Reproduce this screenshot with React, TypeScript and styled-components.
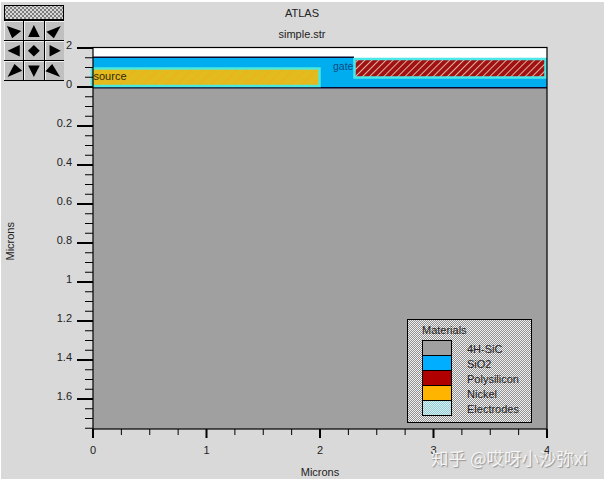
import React from "react";
import styled, { createGlobalStyle } from "styled-components";

const Global = createGlobalStyle`
  html, body { margin: 0; padding: 0; background: #fff; }
`;

const Window = styled.div`
  position: relative;
  box-sizing: border-box;
  width: 603px;
  height: 477px;
  margin: 2px 0 0 1px;
  padding-top: 5px;
  background: #d9d9d9;
  color: #222;
  font-family: "Liberation Sans", Arial, sans-serif;
  font-size: 11px;
  line-height: 13px;
  overflow: hidden;
`;

const Title = styled.div`
  width: 602px;
  text-align: center;
`;

const Subtitle = styled(Title)`
  margin-top: 8px;
`;

const ChartRow = styled.div`
  display: flex;
  height: 421px;
`;

const YTitle = styled.div`
  flex: 0 0 18px;
  display: flex;
  align-items: center;
  justify-content: center;
  padding-bottom: 20px;
  box-sizing: border-box;
  span {
    writing-mode: vertical-rl;
    transform: rotate(180deg);
  }
`;

const Chart = styled.svg`
  display: block;
  flex: none;
  width: 585px;
  height: 421px;
  font-family: "Liberation Sans", Arial, sans-serif;
`;

const XTitle = styled.div`
  margin-top: 4px;
  padding-left: 92px;
  width: 454px;
  text-align: center;
`;

const Toolbar = styled.div`
  position: absolute;
  left: 3px;
  top: 3px;
  width: 60px;
  display: grid;
  grid-template-columns: repeat(3, 1fr);
  gap: 1px;
  background: #000;
  padding-bottom: 1px;
`;

const Grip = styled.div`
  grid-column: 1 / -1;
  height: 13px;
  border: 1px solid #000;
  background-color: #d8d8d8;
  background-image: radial-gradient(circle, #777 0.7px, transparent 0.9px),
    radial-gradient(circle, #777 0.7px, transparent 0.9px);
  background-size: 4px 4px;
  background-position: 0 0, 2px 2px;
`;

const ToolCell = styled.div`
  height: 19px;
  background: #c0c0c0;
  box-shadow: inset 1px 1px 0 #f2f2f2;
  svg {
    display: block;
    width: 100%;
    height: 100%;
  }
`;

const Legend = styled.div`
  position: absolute;
  left: 406px;
  top: 317px;
  box-sizing: border-box;
  width: 125px;
  height: 104px;
  padding: 4px 14px;
  border: 1px solid #000;
  background: repeating-conic-gradient(#909090 0 25%, #f2f2f2 0 50%) 0 0 / 2px 2px;
`;

const LegendTitle = styled.div`
  margin-bottom: 3px;
`;

const LegendRow = styled.div`
  display: flex;
  align-items: center;
  gap: 15px;
  height: 15px;
`;

const LegendLabel = styled.span`
  padding-top: 3px;
`;

const Swatch = styled.div<{ $fill: string }>`
  box-sizing: border-box;
  flex: 0 0 30px;
  height: 16px;
  margin-bottom: -1px;
  border: 1px solid #000;
  background: ${(p) => p.$fill};
`;

const Watermark = styled.div`
  position: absolute;
  left: 430px;
  top: 446px;
  font-family: "Noto Sans CJK SC", "Liberation Sans", sans-serif;
  font-size: 17.5px;
  line-height: 20px;
  white-space: nowrap;
  color: rgba(255, 255, 255, 0.85);
  text-shadow: 1px 1px 1px rgba(90, 90, 90, 0.55);
`;

const yMajor = [-0.2, 0, 0.2, 0.4, 0.6, 0.8, 1, 1.2, 1.4, 1.6];
const yLabels = ["2", "0", "0.2", "0.4", "0.6", "0.8", "1", "1.2", "1.4", "1.6"];
const yPos = (v: number) => 87 + v * 195;
const xPos = (v: number) => 93 + v * 113.5;
const yMinor = Array.from({ length: 40 }, (_, i) => -0.2 + i * 0.05).filter(
  (_, i) => i % 4 !== 0
);
const xMinor = Array.from({ length: 17 }, (_, i) => i * 0.25).filter((_, i) => i % 4 !== 0);

const tools = [
  "2.7,5 17,10 8,17.3",
  "9.7,4 4,16 15.6,16",
  "15.6,5 1.3,10.7 8.7,17.3",
  "3.4,9.7 15.6,4 15.6,15.6",
  "9.7,4 15.6,9.7 9.7,15.4 3.8,9.7",
  "15.6,9.7 4.4,4 4.4,15.6",
  "3.4,16 10.3,3 18,9.7",
  "9.7,16 4,4.4 15.6,4.4",
  "15,16 7,3 0.3,10.3",
];

const materials = [
  { name: "4H-SiC", fill: "#a0a0a0" },
  { name: "SiO2", fill: "#00aeff" },
  { name: "Polysilicon", fill: "#b00000" },
  { name: "Nickel", fill: "#ffb400" },
  {
    name: "Electrodes",
    fill: "repeating-conic-gradient(#8fd0d8 0 25%, #dcecec 0 50%) 0 0 / 2px 2px",
  },
];

export default function App() {
  return (
    <>
      <Global />
      <Window>
        <Title>ATLAS</Title>
        <Subtitle>simple.str</Subtitle>
        <ChartRow>
          <YTitle>
            <span>Microns</span>
          </YTitle>
          <Chart viewBox="19 41 585 421">
            <defs>
              <pattern id="gateHatch" width="5" height="5" patternUnits="userSpaceOnUse" patternTransform="rotate(45)">
                <rect width="5" height="5" fill="#a01212" />
                <rect width="0.8" height="5" fill="#f0d8c8" />
              </pattern>
              <pattern id="nickelHatch" width="8" height="8" patternUnits="userSpaceOnUse" patternTransform="rotate(45)">
                <rect width="8" height="8" fill="#e2bc1e" />
                <rect width="2" height="8" fill="#e9b41c" />
              </pattern>
            </defs>

            <rect x="93" y="47" width="454" height="382" fill="#fff" />
            <rect x="93" y="58" width="454" height="29" fill="#00aeef" />
            <rect x="93" y="87" width="454" height="342" fill="#a0a0a0" />
            <rect x="93" y="56.5" width="261" height="1.5" fill="#0a0a30" />
            <rect x="93" y="87" width="454" height="1.5" fill="#0a0a30" />

            <rect x="92" y="68.5" width="227.5" height="17.5" fill="url(#nickelHatch)" stroke="#4ce8dc" strokeWidth="2.5" />
            <rect x="354.5" y="59" width="191" height="18.5" fill="url(#gateHatch)" stroke="#4ce8e8" strokeWidth="2.5" />
            <text x="93.5" y="80" fontSize="11" fill="#33280c">source</text>
            <text x="333" y="70" fontSize="10.5" fill="#0b4a80">gate</text>

            <rect x="93" y="47.5" width="454" height="381.5" fill="none" stroke="#000" strokeWidth="1.2" />

            {yMajor.map((v, i) => (
              <g key={i}>
                <rect x="77" y={yPos(v) - 1} width="16" height="2" fill="#000" />
                <text x="72" y={yPos(v) + 1} textAnchor="end" fontSize="11" fill="#222">
                  {yLabels[i]}
                </text>
              </g>
            ))}
            {yMinor.map((v) => (
              <rect key={v} x="85" y={yPos(v) - 0.5} width="8" height="1" fill="#000" />
            ))}
            {[0, 1, 2, 3, 4].map((v) => (
              <g key={v}>
                <rect x={xPos(v) - 1} y="429" width="2" height="9" fill="#000" />
                <text x={xPos(v)} y="454" textAnchor="middle" fontSize="11" fill="#222">
                  {v}
                </text>
              </g>
            ))}
            {xMinor.map((v) => (
              <rect key={v} x={xPos(v) - 0.5} y="429" width="1" height="6" fill="#000" />
            ))}
          </Chart>
        </ChartRow>
        <XTitle>Microns</XTitle>

        <Toolbar>
          <Grip />
          {tools.map((points) => (
            <ToolCell key={points}>
              <svg viewBox="0 0 19 19">
                <polygon points={points} fill="#000" />
              </svg>
            </ToolCell>
          ))}
        </Toolbar>

        <Legend>
          <LegendTitle>Materials</LegendTitle>
          {materials.map((m) => (
            <LegendRow key={m.name}>
              <Swatch $fill={m.fill} />
              <LegendLabel>{m.name}</LegendLabel>
            </LegendRow>
          ))}
        </Legend>

        <Watermark>知乎 @哎呀小沙弥xi</Watermark>
      </Window>
    </>
  );
}
